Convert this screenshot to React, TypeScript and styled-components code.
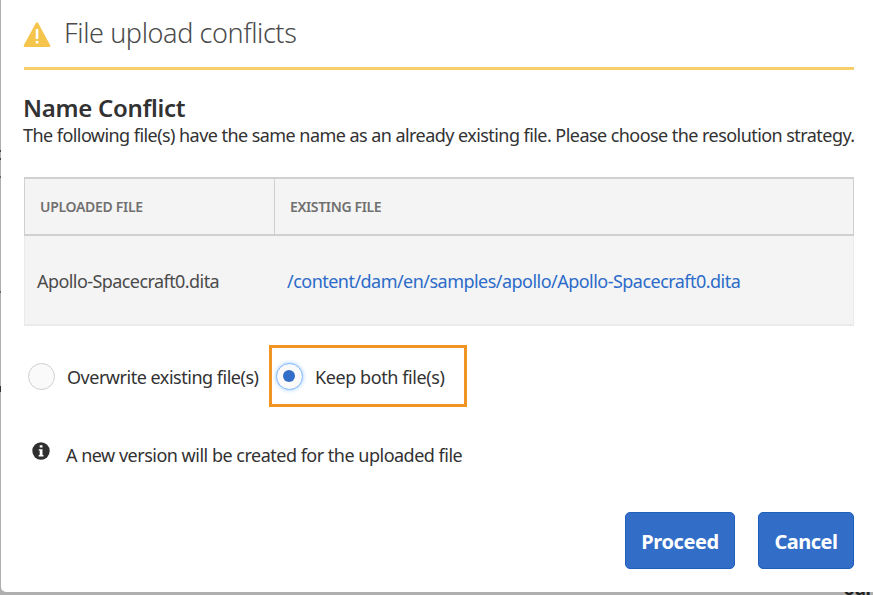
import React from "react";
import styled, { createGlobalStyle } from "styled-components";

const Global = createGlobalStyle`
  * { box-sizing: border-box; }
  html, body { margin: 0; padding: 0; overflow: hidden; }
  body { font-family: "Noto Sans", "Open Sans", sans-serif; color: #323232; }
`;

const Backdrop = styled.div`
  position: relative;
  width: 873px;
  height: 595px;
  padding: 0 0 3px 1px;
  background: #afafaf;
  overflow: hidden;
`;

const PageText = styled.span`
  position: absolute;
  right: 0;
  bottom: -5px;
  font-size: 18px;
  letter-spacing: -0.5px;
  line-height: 24px;
  font-weight: 700;
  color: #222;
`;

const EdgeMark = styled.i<{ $top: number; $height: number; $color: string }>`
  position: absolute;
  left: 0;
  top: ${(p) => p.$top}px;
  width: 1px;
  height: ${(p) => p.$height}px;
  background: ${(p) => p.$color};
`;

const Dialog = styled.section`
  position: relative;
  height: 592px;
  padding: 0 19px 0 23px;
  background: #fff;
  border-radius: 0 0 0 5px;
  display: flex;
  flex-direction: column;
`;

const Text = styled.span<{ $size: number; $spacing?: number; $weight?: number }>`
  display: block;
  white-space: nowrap;
  font-size: ${(p) => p.$size}px;
  font-weight: ${(p) => p.$weight ?? 400};
  letter-spacing: ${(p) => p.$spacing ?? 0}px;
`;

const Header = styled.header`
  height: 70px;
  display: flex;
  align-items: flex-start;
  gap: 13px;
  padding-top: 13px;
  border-bottom: 3px solid #f7cf6a;
  color: #4b4b4b;
  line-height: 40px;
  & > svg { margin: 9px 0 0 -1px; flex: none; }
`;

const Intro = styled.div`
  height: 107px;
  padding-top: 23px;
  line-height: 30px;
  & > p { margin: -3px 0 0 -1px; line-height: 30px; }
`;

const Heading = styled.h2`
  margin: 0 0 0 -1px;
  line-height: 30px;
`;

const Table = styled.div`
  width: 830px;
  height: 149px;
  background: #f4f4f4;
`;

const HeadRow = styled.div`
  display: grid;
  grid-template-columns: 249px 1fr;
  height: 59px;
  border: 1px solid #d0d0d0;
  border-width: 2px 1px;
  color: #707070;
`;

const HeadCell = styled.div`
  display: flex;
  align-items: center;
  padding-left: 15px;
  & + & { border-left: 1px solid #d0d0d0; }
`;

const BodyRow = styled.div`
  display: grid;
  grid-template-columns: 250px 1fr;
  height: 90px;
  border: 1px solid #eaeaea;
  border-width: 0 1px 2px;
`;

const Cell = styled.div`
  display: flex;
  align-items: center;
  padding: 1px 0 0 12px;
  color: #4b4b4b;
`;

const FileLink = styled.a`
  color: #2b6bc9;
`;

const Options = styled.div`
  display: flex;
  margin-top: 19px;
  height: 62px;
`;

const Option = styled.label<{ $framed?: boolean }>`
  display: flex;
  align-items: center;
  gap: 12px;
  width: ${(p) => (p.$framed ? 198 : 245)}px;
  padding-left: 4px;
  border: ${(p) => (p.$framed ? "3px solid #f29423" : "0")};
  & > span { padding-top: 2px; }
`;

const Radio = styled.i<{ $checked?: boolean }>`
  flex: none;
  display: flex;
  align-items: center;
  padding-left: 6px;
  width: 27px;
  height: 27px;
  border-radius: 50%;
  border: 1px solid ${(p) => (p.$checked ? "#7db8fb" : "#cfcfcf")};
  background: #fafafa;
  box-shadow: ${(p) => (p.$checked ? "0 0 4px #9fcbfc" : "none")};
  &::after {
    content: "";
    width: 12px;
    height: 12px;
    border-radius: 50%;
    background: ${(p) => (p.$checked ? "#326ec8" : "transparent")};
  }
`;

const Notice = styled.div`
  display: flex;
  align-items: flex-start;
  gap: 16px;
  margin-top: 34px;
  padding-left: 8px;
  line-height: 28px;
  & > svg { flex: none; margin-top: 1px; }
`;

const Actions = styled.footer`
  display: flex;
  justify-content: flex-end;
  gap: 23px;
  margin-top: auto;
  margin-bottom: 23px;
`;

const Button = styled.button<{ $width: number }>`
  width: ${(p) => p.$width}px;
  height: 57px;
  display: flex;
  align-items: center;
  justify-content: center;
  padding: 2px 0 0;
  border: 1px solid #1f60bd;
  border-radius: 5px;
  background: #326ec8;
  color: #fff;
  font-family: inherit;
`;

export default function App() {
  return (
    <>
      <Global />
      <Backdrop>
        <PageText>our</PageText>
        <Dialog>
          <Header>
            <svg width="28" height="26" viewBox="0 0 28 26">
              <path d="M13 .8Q14 -.4 15 .8L27.200 23.2Q27.800 25 26.200 25H1.800Q.2 25 .8 23.200Z" fill="#f5c44b" />
              <path d="M12.700 7h2.600v10h-2.600zM12.700 19h2.600v2.600h-2.600z" fill="#fff" />
            </svg>
            <Text $size={27} $weight={300} $spacing={-0.4}>File upload conflicts</Text>
          </Header>
          <Intro>
            <Heading><Text $size={24} $weight={600} $spacing={-0.3}>Name Conflict</Text></Heading>
            <p><Text $size={18} $spacing={-0.555}>The following file(s) have the same name as an already existing file. Please choose the resolution strategy.</Text></p>
          </Intro>
          <Table>
            <HeadRow>
              <HeadCell><Text $size={14} $weight={600} $spacing={-0.3}>UPLOADED FILE</Text></HeadCell>
              <HeadCell><Text $size={14} $weight={600} $spacing={-0.35}>EXISTING FILE</Text></HeadCell>
            </HeadRow>
            <BodyRow>
              <Cell><Text $size={18} $spacing={-0.57}>Apollo-Spacecraft0.dita</Text></Cell>
              <Cell><FileLink><Text $size={18} $spacing={-0.53}>/content/dam/en/samples/apollo/Apollo-Spacecraft0.dita</Text></FileLink></Cell>
            </BodyRow>
          </Table>
          <Options>
            <Option><Radio /><Text $size={18} $spacing={-0.48}>Overwrite existing file(s)</Text></Option>
            <Option $framed><Radio $checked /><Text $size={18} $spacing={-0.42}>Keep both file(s)</Text></Option>
          </Options>
          <Notice>
            <svg width="18" height="18" viewBox="0 0 18 18">
              <circle cx="9" cy="9" r="8.7" fill="#2f2f2f" />
              <path d="M7.700 3.200h2.800v2.400h-2.800zM6.700 7.200h3.800v5.800h1v1.400h-4.800v-1.400h1v-4.400h-1z" fill="#fff" />
            </svg>
            <Text $size={18} $spacing={-0.5}>A new version will be created for the uploaded file</Text>
          </Notice>
          <Actions>
            <Button $width={110}><Text $size={20} $weight={700} $spacing={-0.4}>Proceed</Text></Button>
            <Button $width={96}><Text $size={20} $weight={700} $spacing={-0.5}>Cancel</Text></Button>
          </Actions>
        </Dialog>
        <EdgeMark $top={150} $height={2} $color="#444" />
        <EdgeMark $top={158} $height={2} $color="#444" />
        <EdgeMark $top={176} $height={2} $color="#666" />
        <EdgeMark $top={291} $height={2} $color="#666" />
        <EdgeMark $top={386} $height={6} $color="#333" />
      </Backdrop>
    </>
  );
}
